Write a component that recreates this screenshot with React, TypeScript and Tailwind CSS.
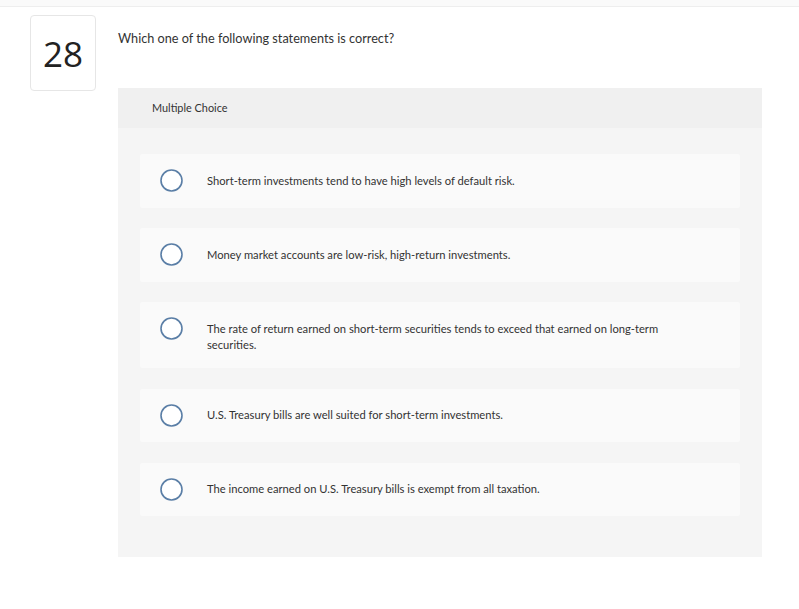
const options = [
  'Short-term investments tend to have high levels of default risk.',
  'Money market accounts are low-risk, high-return investments.',
  'The rate of return earned on short-term securities tends to exceed that earned on long-term securities.',
  'U.S. Treasury bills are well suited for short-term investments.',
  'The income earned on U.S. Treasury bills is exempt from all taxation.',
]

function Radio() {
  return (
    <svg width="23" height="23" viewBox="0 0 23 23" className="shrink-0">
      <circle cx="11.5" cy="11.5" r="10.5" fill="#fff" stroke="#5a7ea6" strokeWidth="1.6" />
    </svg>
  )
}

export default function App() {
  return (
    <div className="w-[799px] h-[609px] bg-white font-['Lato','Open_Sans',sans-serif] text-[#333]">
      {/* top strip */}
      <div className="h-[7px] bg-[#fafafa] border-b border-[#eeeeee]" />

      <div className="flex pt-[8px] pl-[30px]">
        {/* question number */}
        <div className="w-[66px] h-[76px] shrink-0 rounded-[4px] border border-[#e6e6e6] flex items-center justify-center">
          <span className="text-[35px] leading-none text-[#222] font-['Open_Sans',sans-serif]">28</span>
        </div>

        <div className="ml-[22px] w-[644px]">
          <p className="pt-[15px] text-[12.7px] leading-[16px] text-[#333]">
            Which one of the following statements is correct?
          </p>

          {/* answer panel */}
          <div className="mt-[42px] bg-[#f5f5f5] h-[469px]">
            <div className="h-[40px] bg-[#f0f0f0] flex items-center pl-[34px] text-[10.9px] text-[#333]">
              Multiple Choice
            </div>

            <div className="flex flex-col gap-[20.5px] pt-[26px] px-[22px]">
              {options.map((t) => (
                <div key={t} className="bg-[#fafafa] rounded-[2px] flex items-start pl-[20px] pr-[64px] pt-[15px] pb-[15.5px]">
                  <Radio />
                  <p className="ml-[24px] pt-[3.5px] text-[11.2px] leading-[16px] text-[#333]">{t}</p>
                </div>
              ))}
            </div>
          </div>
        </div>
      </div>
    </div>
  )
}
